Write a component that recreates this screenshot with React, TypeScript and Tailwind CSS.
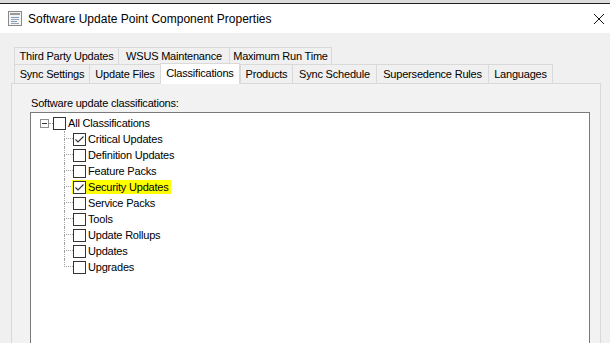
import React from 'react';

const font = { fontFamily: '"Liberation Sans", Arial, sans-serif' };

const topTabs = [
  { label: 'Third Party Updates', w: 'w-[104px]' },
  { label: 'WSUS Maintenance', w: 'w-[111px]' },
  { label: 'Maximum Run Time', w: 'w-[103px]' },
];

const tabs = [
  { label: 'Sync Settings', w: 'w-[75px]' },
  { label: 'Update Files', w: 'w-[71px]' },
  { label: 'Classifications', w: 'w-[80px]', active: true },
  { label: 'Products', w: 'w-[52px]' },
  { label: 'Sync Schedule', w: 'w-[84px]' },
  { label: 'Supersedence Rules', w: 'w-[112px]' },
  { label: 'Languages', w: 'w-[65px]' },
];

const items = [
  { label: 'Critical Updates', checked: true },
  { label: 'Definition Updates' },
  { label: 'Feature Packs' },
  { label: 'Security Updates', checked: true, highlight: true },
  { label: 'Service Packs' },
  { label: 'Tools' },
  { label: 'Update Rollups' },
  { label: 'Updates' },
  { label: 'Upgrades' },
];

const Checkbox = ({ checked }: { checked?: boolean }) => (
  <div className="w-[13px] h-[13px] border border-[#333333] bg-white shrink-0 flex items-center justify-center">
    {checked && (
      <svg viewBox="0 0 11 11" className="w-[11px] h-[11px]">
        <path d="M1.5 5.5 L4 8 L9.5 2.5" fill="none" stroke="#333333" strokeWidth="1.1" />
      </svg>
    )}
  </div>
);

export default function App() {
  return (
    <div
      className="w-[610px] h-[343px] overflow-hidden bg-[#f0f0f0] flex flex-col text-[11px] tracking-[-0.2px] text-black"
      style={font}
    >
      {/* window frame top */}
      <div className="h-[3px] bg-[#dcdcdc]" />
      <div className="h-px bg-[#1f1f1f]" />

      {/* Title bar */}
      <div className="h-[29px] bg-white flex items-center pl-[8px] pr-[6px]">
        <svg viewBox="0 0 14 15" className="w-[14px] h-[15px] mr-[6px]">
          <rect x="0.5" y="0.5" width="13" height="14" fill="#f4f4f4" stroke="#8a8a8a" />
          <rect x="2" y="2" width="10" height="2" fill="#9a9a9a" />
          <rect x="3" y="6" width="8" height="1" fill="#6f9fd0" />
          <rect x="3" y="8" width="8" height="1" fill="#a0a0a0" />
          <rect x="3" y="10" width="6" height="1" fill="#6f9fd0" />
          <rect x="3" y="12" width="8" height="1" fill="#a0a0a0" />
        </svg>
        <span className="text-[12px] tracking-normal">Software Update Point Component Properties</span>
        <svg viewBox="0 0 10 10" className="w-[10px] h-[10px] ml-auto">
          <path d="M0 0 L10 10 M10 0 L0 10" stroke="#111" strokeWidth="1" />
        </svg>
      </div>

      {/* Body */}
      <div className="flex-1 flex flex-col pt-[14px]">
        {/* back tab row */}
        <div className="flex ml-[14px] h-[17px]">
          {topTabs.map((t) => (
            <div
              key={t.label}
              className={`${t.w} h-full border border-r-0 last:border-r border-b-0 border-[#d9d9d9] bg-[#f0f0f0] flex items-center justify-center whitespace-nowrap leading-none`}
            >
              {t.label}
            </div>
          ))}
        </div>
        {/* front tab row */}
        <div className="flex ml-[14px] h-[19px] items-end">
          {tabs.map((t) =>
            t.active ? (
              <div
                key={t.label}
                className={`${t.w} h-[21px] -mb-px relative z-10 border border-b-0 border-[#d9d9d9] bg-white flex items-start justify-center pt-[4px] whitespace-nowrap leading-none`}
              >
                {t.label}
              </div>
            ) : (
              <div
                key={t.label}
                className={`${t.w} h-full border border-r-0 last:border-r border-b-0 border-[#d9d9d9] bg-[#f0f0f0] flex items-center justify-center pt-[1px] whitespace-nowrap leading-none`}
              >
                {t.label}
              </div>
            )
          )}
        </div>

        {/* Tab page */}
        <div className="flex-1 ml-[11px] w-[590px] border border-b-0 border-[#d9d9d9] bg-[#f2f2f2] flex flex-col pl-[18px] pr-[10px] pt-[14px]">
          <div className="leading-none mb-[3px] ml-px">Software update classifications:</div>
          <div className="flex-1 border border-b-0 border-[#7a7a7a] bg-white pt-[2px]">
            {/* root row */}
            <div className="h-[16px] flex items-center">
              <div className="w-[9px] h-[9px] ml-[9px] border border-[#8f8f8f] bg-white flex items-center justify-center">
                <div className="w-[5px] h-px bg-[#333]" />
              </div>
              <div className="w-[4px] border-t border-dotted border-[#a0a0a0]" />
              <Checkbox />
              <span className="ml-[2px] leading-none">All Classifications</span>
            </div>
            {/* children */}
            {items.map((it, i) => {
              const last = i === items.length - 1;
              return (
                <div key={it.label} className="h-[16px] flex items-stretch">
                  <div className="ml-[33px] w-[9px] flex flex-col">
                    <div className="h-[8px] border-l border-b border-dotted border-[#a0a0a0]" />
                    <div className={`h-[8px] ${last ? '' : 'border-l border-dotted border-[#a0a0a0]'}`} />
                  </div>
                  <div
                    className={`flex items-center self-center h-[14px] ${it.highlight ? 'bg-[#ffff00] -ml-px pl-px pr-[2px]' : ''}`}
                  >
                    <Checkbox checked={it.checked} />
                    <span className="ml-[2px] leading-none">{it.label}</span>
                  </div>
                </div>
              );
            })}
          </div>
        </div>
      </div>
    </div>
  );
}
